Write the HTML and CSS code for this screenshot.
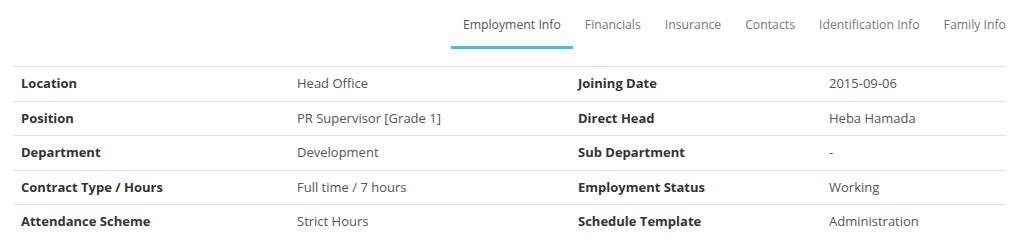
FILE: index.html
```html
<!DOCTYPE html>
<html>
<head>
<meta charset="utf-8">
<link rel="stylesheet" href="styles.css">
</head>
<body>
<div class="wrap">
  <nav class="tabs">
    <a class="tab active">Employment Info</a>
    <a class="tab">Financials</a>
    <a class="tab">Insurance</a>
    <a class="tab">Contacts</a>
    <a class="tab">Identification Info</a>
    <a class="tab">Family Info</a>
  </nav>
  <table class="info">
    <colgroup>
      <col class="c1"><col class="c2"><col class="c3"><col class="c4">
    </colgroup>
    <tbody>
      <tr><th>Location</th><td>Head Office</td><th>Joining Date</th><td>2015-09-06</td></tr>
      <tr><th>Position</th><td>PR Supervisor [Grade 1]</td><th>Direct Head</th><td>Heba Hamada</td></tr>
      <tr><th>Department</th><td>Development</td><th>Sub Department</th><td>-</td></tr>
      <tr><th>Contract Type / Hours</th><td>Full time / 7 hours</td><th>Employment Status</th><td>Working</td></tr>
      <tr><th>Attendance Scheme</th><td>Strict Hours</td><th>Schedule Template</th><td>Administration</td></tr>
    </tbody>
  </table>
</div>
</body>
</html>
```
FILE: styles.css
```css
html, body {
  margin: 0;
  padding: 0;
  background: #fff;
}
body {
  font-family: "Open Sans", "Liberation Sans", sans-serif;
  font-size: 13px;
  color: #555;
}
.wrap {
  padding: 0 6px 0 13px;
}
.tabs {
  display: flex;
  justify-content: flex-end;
}
.tab {
  display: block;
  padding: 16px 12px 12px;
  font-size: 12.25px;
  line-height: 18px;
  color: #777;
  border-bottom: 3px solid transparent;
  white-space: nowrap;
}
.tab.active {
  color: #555;
  border-bottom-color: #46bfcc;
}
.info {
  margin-top: 17px;
  width: 993px;
  border-collapse: collapse;
  table-layout: fixed;
}
.c1 { width: 276px; }
.c2 { width: 281px; }
.c3 { width: 251px; }
.c4 { width: 185px; }
.info th,
.info td {
  text-align: left;
  padding: 8px;
  line-height: 17.5px;
  border-top: 1px solid #e0e0e0;
  vertical-align: top;
}
.info th {
  font-weight: 700;
  color: #333;
}
.info td {
  color: #555;
}
```
